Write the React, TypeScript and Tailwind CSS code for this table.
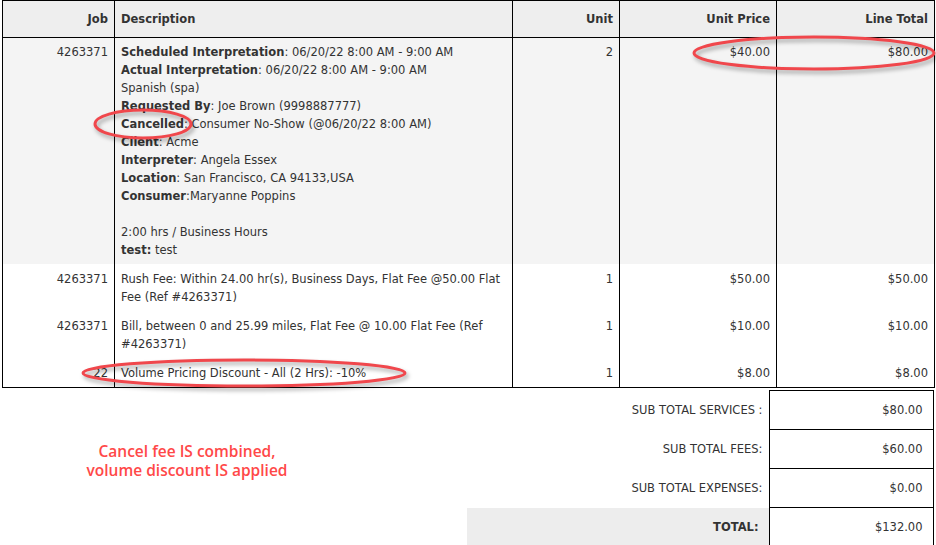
import { Fragment } from "react";

const LINES = [
  { job: "4263371", desc: "Rush Fee: Within 24.00 hr(s), Business Days, Flat Fee @50.00 Flat Fee (Ref #4263371)", unit: "1", price: "$50.00", total: "$50.00" },
  { job: "4263371", desc: "Bill, between 0 and 25.99 miles, Flat Fee @ 10.00 Flat Fee (Ref #4263371)", unit: "1", price: "$10.00", total: "$10.00" },
  { job: "22", desc: "Volume Pricing Discount - All (2 Hrs): -10%", unit: "1", price: "$8.00", total: "$8.00" },
];

const DETAILS: [string, string][] = [
  ["Scheduled Interpretation", ": 06/20/22 8:00 AM - 9:00 AM"],
  ["Actual Interpretation", ": 06/20/22 8:00 AM - 9:00 AM"],
  ["", "Spanish (spa)"],
  ["Requested By", ": Joe Brown (9998887777)"],
  ["Cancelled", ": Consumer No-Show (@06/20/22 8:00 AM)"],
  ["Client", ": Acme"],
  ["Interpreter", ": Angela Essex"],
  ["Location", ": San Francisco, CA 94133,USA"],
  ["Consumer", ":Maryanne Poppins"],
];

const TOTALS = [
  { label: "SUB TOTAL SERVICES :", value: "$80.00" },
  { label: "SUB TOTAL FEES:", value: "$60.00" },
  { label: "SUB TOTAL EXPENSES:", value: "$0.00" },
];

const cell = "px-[6px] py-[5px] align-top border-x border-black";
const lineCell = "px-[6px] pt-[6px] pb-[5px] align-top border-x border-black";

export default function App() {
  return (
    <div className="relative w-[936px] h-[545px] overflow-hidden bg-white text-[#333] text-[11.5px] leading-[18px]" style={{ fontFamily: '"DejaVu Sans", Verdana, sans-serif' }}>
      <table className="ml-[2px] w-[932px] table-fixed border-collapse border border-black">
        <colgroup>
          <col className="w-[112px]" />
          <col className="w-[398px]" />
          <col className="w-[107px]" />
          <col className="w-[157px]" />
          <col className="w-[158px]" />
        </colgroup>
        <thead>
          <tr className="bg-[#eeeeee] font-bold">
            <th className="px-[6px] py-[9px] text-right border border-black">Job</th>
            <th className="px-[6px] py-[9px] text-left border border-black">Description</th>
            <th className="px-[6px] py-[9px] text-right border border-black">Unit</th>
            <th className="px-[6px] py-[9px] text-right border border-black">Unit Price</th>
            <th className="px-[6px] py-[9px] text-right border border-black">Line Total</th>
          </tr>
        </thead>
        <tbody>
          <tr className="bg-[#f4f4f4]">
            <td className={`${cell} text-right`}>4263371</td>
            <td className={cell}>
              {DETAILS.map(([k, v], i) => (
                <div key={i}>
                  {k && <b>{k}</b>}
                  {v}
                </div>
              ))}
              <div>&nbsp;</div>
              <div>2:00 hrs / Business Hours</div>
              <div><b>test:</b> test</div>
            </td>
            <td className={`${cell} text-right`}>2</td>
            <td className={`${cell} text-right`}>$40.00</td>
            <td className={`${cell} text-right`}>$80.00</td>
          </tr>
          {LINES.map((l, i) => (
            <Fragment key={i}>
              <tr>
                <td className={`${lineCell} text-right`}>{l.job}</td>
                <td className={lineCell}>{l.desc}</td>
                <td className={`${lineCell} text-right`}>{l.unit}</td>
                <td className={`${lineCell} text-right`}>{l.price}</td>
                <td className={`${lineCell} text-right`}>{l.total}</td>
              </tr>
            </Fragment>
          ))}
        </tbody>
      </table>

      <div className="flex mt-[2px]">
        <div className="w-[467px]">
          <div className="ml-[57px] mt-[52px] w-[260px] text-center text-[15.5px] leading-[19px] font-semibold text-[#ff4848]" style={{ fontFamily: '"Open Sans", "Noto Sans", sans-serif' }}>
            <div>Cancel fee IS combined,</div>
            <div>volume discount IS applied</div>
          </div>
        </div>
        <table className="w-[466px] table-fixed border-collapse">
          <colgroup>
            <col className="w-[302px]" />
            <col className="w-[164px]" />
          </colgroup>
          <tbody>
            {TOTALS.map((t) => (
              <tr key={t.label} className="h-[39px]">
                <td className="pr-[6px] text-right uppercase">{t.label}</td>
                <td className="pr-[10px] text-right border border-black">{t.value}</td>
              </tr>
            ))}
            <tr className="h-[39px]">
              <td className="pr-[10px] text-right font-bold bg-[#ededed]">TOTAL:</td>
              <td className="pr-[10px] text-right border border-black">$132.00</td>
            </tr>
          </tbody>
        </table>
      </div>

      {/* annotation ellipses */}
      <svg className="absolute left-0 top-0 pointer-events-none" width="936" height="545" style={{ filter: "drop-shadow(2px 3px 2px rgba(0,0,0,0.35))" }}>
        <ellipse cx="143" cy="124" rx="48" ry="14" fill="none" stroke="#f0474c" strokeWidth="3" />
        <ellipse cx="814" cy="53" rx="120" ry="16" fill="none" stroke="#f0474c" strokeWidth="3" />
        <ellipse cx="244" cy="373" rx="161" ry="13" fill="none" stroke="#f0474c" strokeWidth="3" />
      </svg>
    </div>
  );
}
